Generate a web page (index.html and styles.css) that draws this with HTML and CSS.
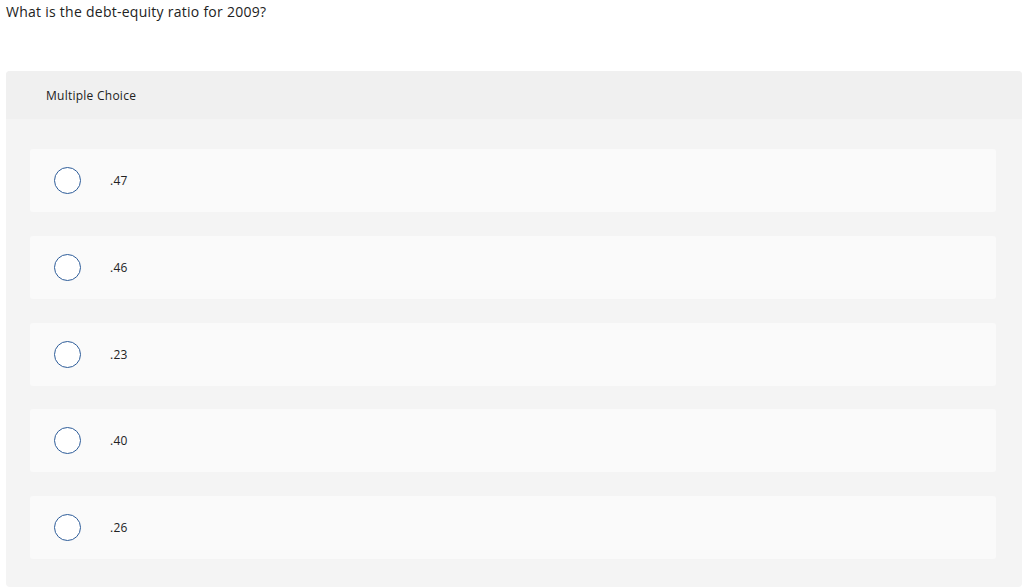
FILE: index.html
```html
<!DOCTYPE html>
<html>
<head>
<meta charset="utf-8">
<link rel="stylesheet" href="styles.css">
</head>
<body>
<div class="page">
  <p class="question">What is the debt-equity ratio for 2009?</p>
  <div class="panel">
    <div class="panel-head">Multiple Choice</div>
    <div class="panel-body">
      <label class="option"><span class="radio"></span><span class="opt-text">.47</span></label>
      <label class="option"><span class="radio"></span><span class="opt-text">.46</span></label>
      <label class="option"><span class="radio"></span><span class="opt-text">.23</span></label>
      <label class="option"><span class="radio"></span><span class="opt-text">.40</span></label>
      <label class="option"><span class="radio"></span><span class="opt-text">.26</span></label>
    </div>
  </div>
</div>
</body>
</html>
```

FILE: styles.css
```css
* { box-sizing: border-box; }
html, body { margin: 0; padding: 0; background: #fff; }
body { font-family: "Open Sans", "Lato", Arial, sans-serif; color: #222; }
.page { padding: 0 2px 0 6px; }
.question {
  margin: 0;
  padding-top: 3px;
  font-size: 14px;
  letter-spacing: 0.26px;
  line-height: 18px;
  height: 71px;
  color: #222;
}
.panel {
  border-radius: 4px;
  background: #f4f4f4;
  overflow: hidden;
}
.panel-head {
  background: #f0f0f0;
  height: 48px;
  display: flex;
  align-items: center;
  padding-left: 40px;
  font-size: 12px;
  letter-spacing: 0.25px;
  color: #222;
}
.panel-body {
  padding: 30px 26px 28px 24px;
  display: flex;
  flex-direction: column;
  gap: 23.75px;
}
.option {
  height: 63px;
  background: #fafafa;
  border-radius: 3px;
  display: flex;
  align-items: center;
  padding-left: 24px;
}
.radio {
  width: 27px;
  height: 27px;
  border: 1.3px solid #2d5c99;
  border-radius: 50%;
  background: #fff;
  flex: none;
}
.opt-text {
  margin-left: 29px;
  font-size: 12px;
  letter-spacing: 0.25px;
  color: #222;
}
```
